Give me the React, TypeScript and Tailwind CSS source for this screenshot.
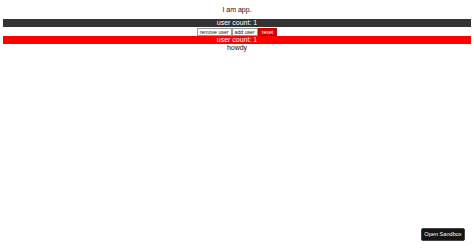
import React from "react";

export default function App() {
  return (
    <div className="relative w-[474px] h-[248px] bg-white text-[#111] font-['Liberation_Sans',Arial,sans-serif]">
      <div className="px-[3px] pt-[6px]">
        <p className="text-center text-[7px] leading-[8px]">I am app.</p>
        <div className="mt-[5px] h-[8px] bg-[#333333] text-white text-center text-[7px] leading-[8px]">
          user count: 1
        </div>
        <div className="flex justify-center h-[9px] pt-[1px]">
          <button className="h-[8px] px-[2px] border border-[#999] bg-white text-[5.2px] leading-[6px] text-[#222]">
            remove user
          </button>
          <button className="h-[8px] px-[2px] border border-[#999] bg-white text-[5.2px] leading-[6px] text-[#222]">
            add user
          </button>
          <button className="h-[8px] px-[3px] border border-[#b00] bg-[#e00000] text-[5.2px] leading-[6px] text-white">
            reset
          </button>
        </div>
        <div className="h-[8px] bg-[#ff0000] text-white text-center text-[7px] leading-[8px]">
          user count: 1
        </div>
        <p className="text-center text-[7px] leading-[8px]">howdy</p>
      </div>
      <div className="absolute right-[9px] bottom-[7px] h-[13px] w-[44px] rounded-[2px] bg-[#151515] border border-[#444] text-white text-[5.6px] flex items-center justify-center">
        Open Sandbox
      </div>
    </div>
  );
}
